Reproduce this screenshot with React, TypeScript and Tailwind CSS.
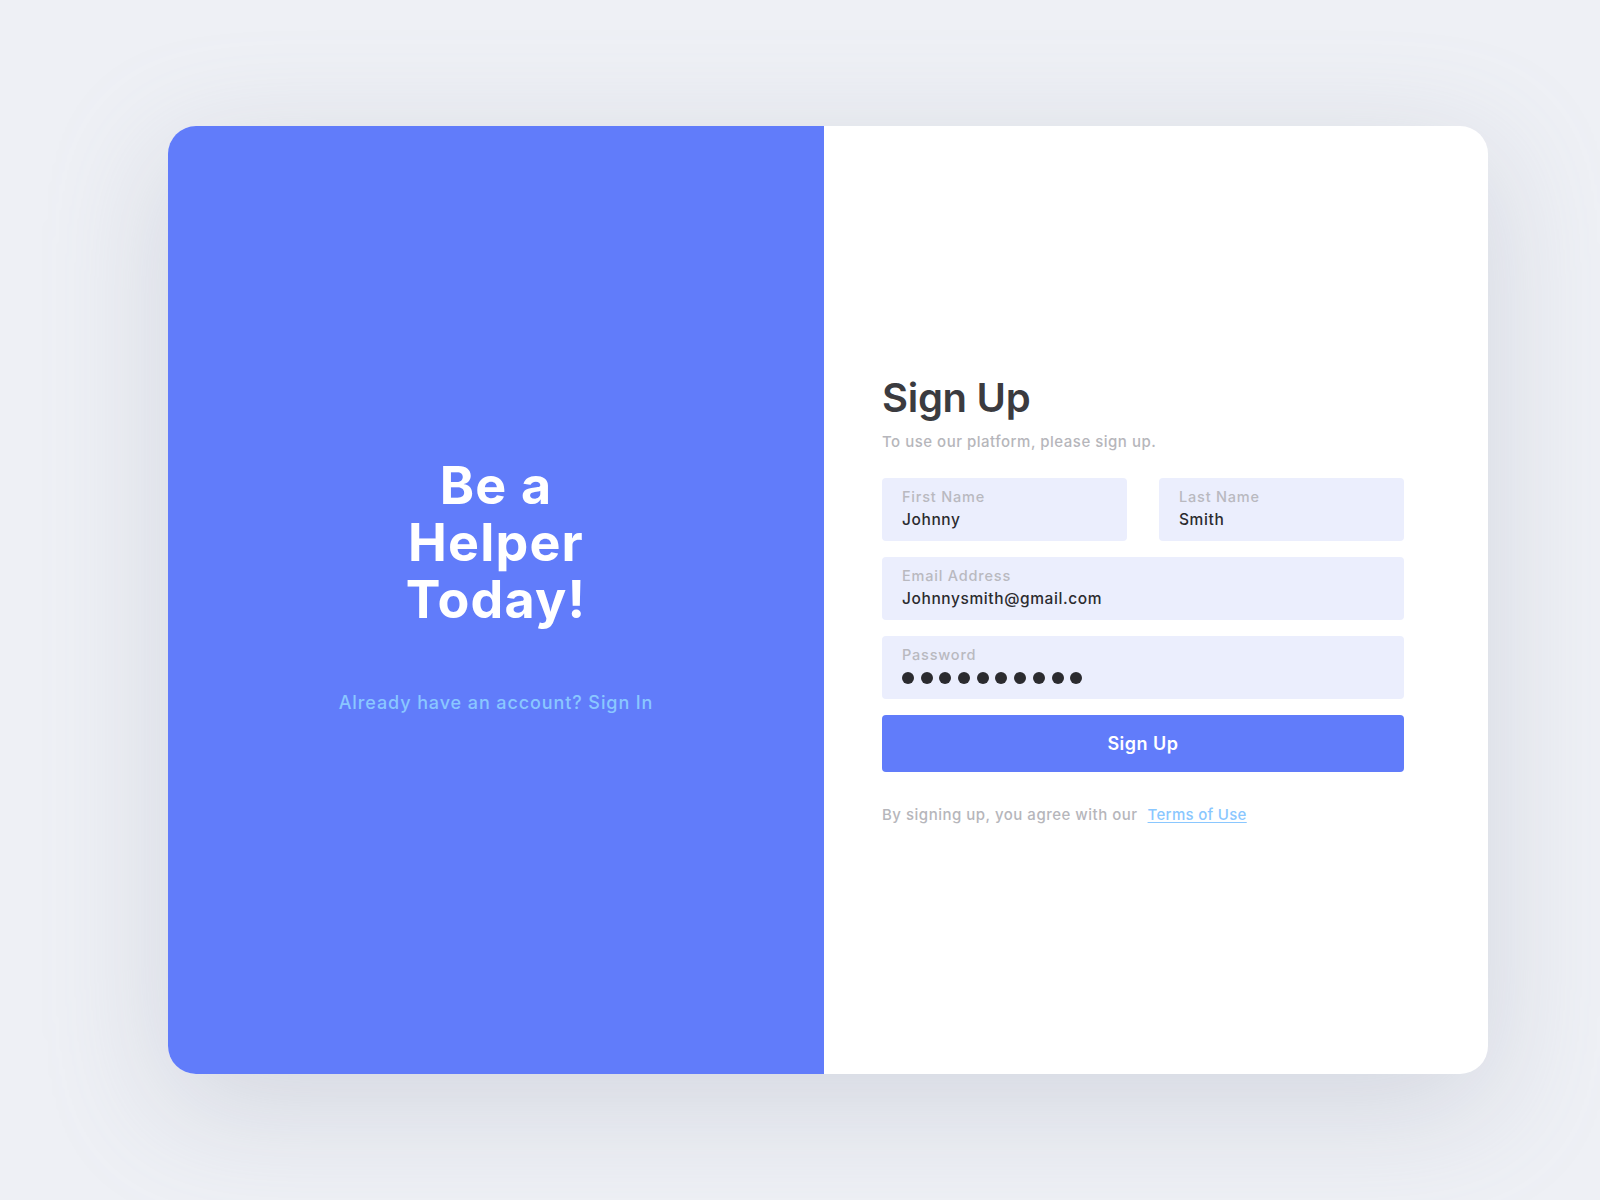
import React from "react";

const font = { fontFamily: "Inter, 'Open Sans', sans-serif" };

function Field({ label, value, className = "" }: { label: string; value: React.ReactNode; className?: string }) {
  return (
    <div className={`flex h-[63px] flex-col justify-center rounded-[4px] bg-[#ebeefd] px-[20px] pb-[2px] ${className}`}>
      <span className="text-[14.5px] leading-[18px] font-medium tracking-[0.8px] text-[#b9b9c0]">{label}</span>
      <span className="mt-[4px] text-[15.5px] leading-[20px] font-medium tracking-[0.6px] text-[#2b2b2f]">{value}</span>
    </div>
  );
}

export default function App() {
  const dots = Array.from({ length: 10 });

  return (
    <div className="flex h-[1200px] w-full items-start bg-[#eef0f5] pt-[126px] pl-[168px]" style={font}>
      <div className="flex h-[948px] w-[1320px] overflow-hidden rounded-[28px] bg-white shadow-[0_30px_120px_rgba(150,155,175,0.3)]">
        {/* left hero */}
        <div className="flex w-[656px] shrink-0 flex-col items-center justify-center bg-[#617cfa] pb-[28px]">
          <h1 className="text-center text-[52px] leading-[57px] font-bold tracking-[1.2px] text-white">
            Be a
            <br />
            Helper
            <br />
            Today!
          </h1>
          <a href="#" className="mt-[61px] text-[18px] font-medium tracking-[0.9px] text-[#8ac7ff]">
            Already have an account? Sign In
          </a>
        </div>

        {/* right form */}
        <div className="flex flex-1 flex-col justify-center pl-[58px]">
          <div className="w-[522px]">
            <h2 className="text-[40px] leading-[48px] font-semibold tracking-[-0.3px] text-[#3b3b3f]">Sign Up</h2>
            <p className="mt-[9px] text-[15px] font-medium tracking-[0.5px] text-[#b6b6bb]">
              To use our platform, please sign up.
            </p>

            <div className="mt-[25px] flex gap-[32px]">
              <Field label="First Name" value="Johnny" className="flex-1" />
              <Field label="Last Name" value="Smith" className="flex-1" />
            </div>
            <Field label="Email Address" value="Johnnysmith@gmail.com" className="mt-[16px]" />
            <Field
              label="Password"
              className="mt-[16px]"
              value={
                <span className="flex h-[20px] items-center gap-[6.7px]">
                  {dots.map((_, i) => (
                    <span key={i} className="h-[12px] w-[12px] rounded-full bg-[#2b2b2f]" />
                  ))}
                </span>
              }
            />

            <button className="mt-[16px] h-[57px] w-full rounded-[4px] bg-[#617cfa] text-[18px] font-semibold tracking-[0.5px] text-white">
              Sign Up
            </button>

            <p className="mt-[32px] text-[15px] font-medium tracking-[0.5px] text-[#b6b6bb]">
              By signing up, you agree with our
              <a href="#" className="ml-[10px] tracking-[0.3px] text-[#8ac7ff] underline underline-offset-2">
                Terms of Use
              </a>
            </p>
          </div>
        </div>
      </div>
    </div>
  );
}
